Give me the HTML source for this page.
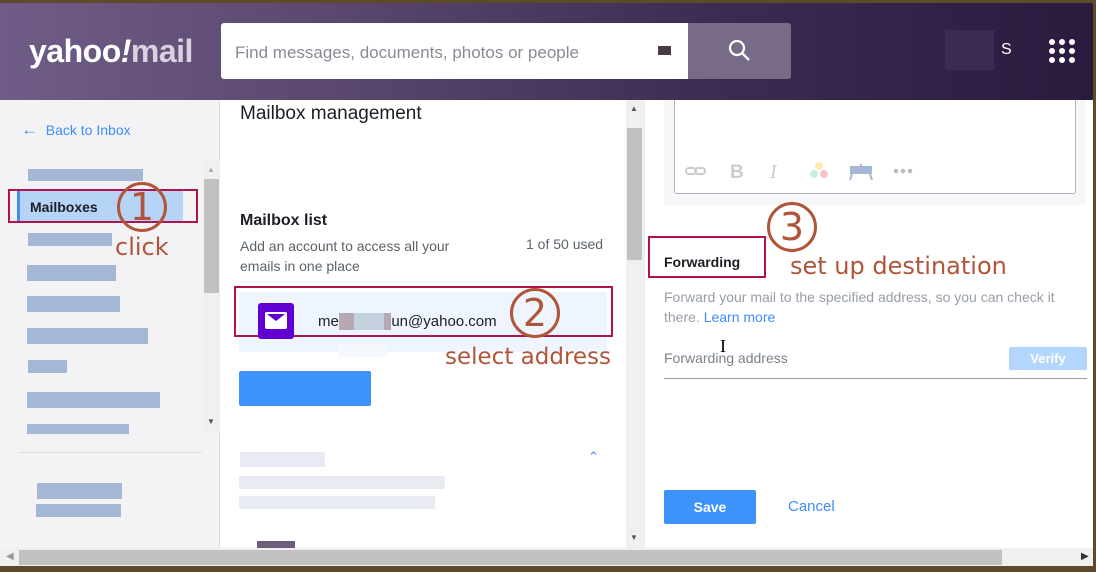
<!DOCTYPE html>
<html><head><meta charset="utf-8"><style>
*{margin:0;padding:0;box-sizing:border-box}
body{width:1096px;height:572px;overflow:hidden;position:relative;background:#fff;font-family:"Liberation Sans","DejaVu Sans",sans-serif}
.a{position:absolute}
.bar{position:absolute;background:#a4b8d6}
.red{position:absolute;border:2px solid #b0144a}
.ann{position:absolute;color:#b0553a;font-family:"DejaVu Sans",sans-serif}
.circ{position:absolute;border:3px solid #b0553a;border-radius:50%;color:#b0553a;font-family:"DejaVu Sans",sans-serif;text-align:center}
</style></head><body>
<div class="a" style="left:0;top:0;width:1096px;height:3px;background:#5e4a2a"></div>
<div class="a" style="left:0;top:3px;width:1096px;height:97px;background:linear-gradient(90deg,#6f5d87 0%,#5a486f 30%,#3c2c52 65%,#2a1a3e 100%)"></div>
<div class="a" style="left:29px;top:33px;font-size:32px;font-weight:bold;color:#fff;letter-spacing:-0.5px">yahoo<span style="font-style:italic">!</span><span style="color:#d8d2e0">mail</span></div>
<div class="a" style="left:221px;top:23px;width:467px;height:56px;background:#fff;border-radius:3px 0 0 3px"></div>
<div class="a" style="left:235px;top:43px;font-size:17px;color:#8a8a96">Find messages, documents, photos or people</div>
<div class="a" style="left:658px;top:46px;width:13px;height:9px;background:#4a3a44"></div>
<div class="a" style="left:688px;top:23px;width:103px;height:56px;background:#776b87;border-radius:0 3px 3px 0"></div>
<svg class="a" style="left:727px;top:38px" width="26" height="26" viewBox="0 0 26 26"><circle cx="10" cy="10" r="7" fill="none" stroke="#fff" stroke-width="2.2"/><path d="M15 15l7 7" stroke="#fff" stroke-width="2.4"/></svg>
<div class="a" style="left:945px;top:30px;width:49px;height:40px;background:#3c2b51"></div>
<div class="a" style="left:1001px;top:41px;font-size:16px;color:#fff">S</div>
<svg class="a" style="left:1048px;top:38px" width="28" height="26"><g fill="#fff"><circle cx="4" cy="4" r="3"/><circle cx="14" cy="4" r="3"/><circle cx="24" cy="4" r="3"/><circle cx="4" cy="13" r="3"/><circle cx="14" cy="13" r="3"/><circle cx="24" cy="13" r="3"/><circle cx="4" cy="22" r="3"/><circle cx="14" cy="22" r="3"/><circle cx="24" cy="22" r="3"/></g></svg>

<div class="a" style="left:0;top:100px;width:220px;height:448px;background:#f3f3f6;border-right:1px solid #ddd"></div>
<div class="a" style="left:21px;top:120px;font-size:14px;color:#3d8ef6"><span style="font-size:17px">&#8592;</span>&nbsp; Back to Inbox</div>
<div class="bar" style="left:28px;top:169px;width:115px;height:12px"></div>
<div class="a" style="left:17px;top:191px;width:166px;height:31px;background:#b6d4f6;border-left:3px solid #3d8ef6"></div>
<div class="a" style="left:30px;top:199px;font-size:14px;font-weight:bold;color:#1d1d26">Mailboxes</div>
<div class="red" style="left:8px;top:189px;width:190px;height:34px"></div>
<div class="bar" style="left:28px;top:233px;width:84px;height:13px"></div>
<div class="bar" style="left:27px;top:265px;width:89px;height:16px"></div>
<div class="bar" style="left:27px;top:296px;width:93px;height:16px"></div>
<div class="bar" style="left:27px;top:328px;width:121px;height:16px"></div>
<div class="bar" style="left:28px;top:360px;width:39px;height:13px"></div>
<div class="bar" style="left:27px;top:392px;width:133px;height:16px"></div>
<div class="bar" style="left:27px;top:424px;width:102px;height:10px"></div>
<div class="a" style="left:18px;top:452px;width:184px;height:1px;background:#ddd"></div>
<div class="bar" style="left:37px;top:483px;width:85px;height:16px"></div>
<div class="bar" style="left:36px;top:504px;width:85px;height:13px"></div>
<div class="a" style="left:203px;top:160px;width:17px;height:273px;background:#f0f0f0"></div>
<div class="a" style="left:204px;top:179px;width:15px;height:114px;background:#c1c1c1"></div>
<div class="a" style="left:207px;top:165px;font-size:8px;color:#aaa">&#9650;</div>
<div class="a" style="left:207px;top:417px;font-size:8px;color:#555">&#9660;</div>
<div class="circ" style="left:117px;top:182px;width:50px;height:50px;font-size:38px;line-height:44px">1</div>
<div class="ann" style="left:115px;top:233px;font-size:24px">click</div>

<div class="a" style="left:240px;top:103px;font-size:19px;color:#1d1d26">Mailbox management</div>
<div class="a" style="left:240px;top:212px;font-size:16px;font-weight:bold;color:#1d1d26">Mailbox list</div>
<div class="a" style="left:240px;top:236px;font-size:14px;color:#5b636a;line-height:20px">Add an account to access all your<br>emails in one place</div>
<div class="a" style="left:526px;top:236px;font-size:14px;color:#5b636a">1 of 50 used</div>
<div class="a" style="left:239px;top:292px;width:368px;height:60px;background:#eef5fe"></div>
<div class="a" style="left:338px;top:345px;width:50px;height:12px;background:#f5f8fd"></div>
<div class="red" style="left:234px;top:286px;width:379px;height:51px"></div>
<div class="a" style="left:258px;top:303px;width:36px;height:36px;background:#6001d2;border-radius:3px"></div>
<svg class="a" style="left:264px;top:311px" width="24" height="20"><rect x="1" y="1" width="22" height="17" rx="2" fill="#fff"/><path d="M3 3h18l-9 7z" fill="#6001d2"/></svg>
<div class="a" style="left:318px;top:313px;font-size:15px;color:#1d1d26">me<span style="background:#b7a9b4;color:transparent">xx</span><span style="background:#c4d2e0;color:transparent">xxxx</span><span style="background:#b7a9b4;color:transparent">x</span>un@yahoo.com</div>
<div class="circ" style="left:510px;top:288px;width:50px;height:50px;font-size:38px;line-height:44px">2</div>
<div class="ann" style="left:445px;top:344px;font-size:23px">select address</div>
<div class="a" style="left:239px;top:371px;width:132px;height:35px;background:#3d92fb;border-radius:2px"></div>
<div class="a" style="left:240px;top:452px;width:85px;height:15px;background:#e8ebf1"></div>
<div class="a" style="left:588px;top:449px;font-size:13px;color:#3d8ef6">&#8963;</div>
<div class="a" style="left:239px;top:476px;width:206px;height:13px;background:#e8ebf1"></div>
<div class="a" style="left:239px;top:496px;width:196px;height:13px;background:#e8ebf1"></div>
<div class="a" style="left:257px;top:541px;width:38px;height:7px;background:#6e5d7a"></div>
<div class="a" style="left:626px;top:100px;width:19px;height:448px;background:#f0f0f0"></div>
<div class="a" style="left:627px;top:128px;width:15px;height:132px;background:#c1c1c1"></div>
<div class="a" style="left:630px;top:104px;font-size:8px;color:#555">&#9650;</div>
<div class="a" style="left:630px;top:533px;font-size:8px;color:#555">&#9660;</div>

<div class="a" style="left:664px;top:100px;width:422px;height:105px;background:#f7f7f9"></div>
<div class="a" style="left:674px;top:100px;width:402px;height:94px;background:#fff;border:1px solid #b4b4bc;border-top:none;border-radius:0 0 3px 3px"></div>
<svg class="a" style="left:684px;top:160px" width="240" height="22">
<rect x="2" y="8" width="10" height="6" rx="3" fill="none" stroke="#ccc" stroke-width="2"/><rect x="11" y="8" width="10" height="6" rx="3" fill="none" stroke="#ccc" stroke-width="2"/>
<text x="46" y="18" font-family="Liberation Sans" font-weight="bold" font-size="19" fill="#ccc">B</text>
<text x="86" y="18" font-family="Liberation Serif" font-style="italic" font-size="20" fill="#ccc">I</text>
<circle cx="135" cy="6" r="4" fill="#fdecb4"/><circle cx="130" cy="14" r="4" fill="#c8ece0"/><circle cx="140" cy="14" r="4" fill="#f8c4c8"/>
<rect x="166" y="6" width="22" height="8" fill="#a4b8d6"/><path d="M168 14l-2 6M186 14l2 6M177 4v2" stroke="#a4b8d6" stroke-width="2"/>
<circle cx="212" cy="11" r="2.3" fill="#bbb"/><circle cx="219" cy="11" r="2.3" fill="#bbb"/><circle cx="226" cy="11" r="2.3" fill="#bbb"/>
</svg>
<div class="red" style="left:648px;top:236px;width:118px;height:42px"></div>
<div class="a" style="left:664px;top:254px;font-size:14px;font-weight:bold;color:#1d1d26">Forwarding</div>
<div class="circ" style="left:767px;top:202px;width:50px;height:50px;font-size:38px;line-height:44px">3</div>
<div class="ann" style="left:790px;top:252px;font-size:24px">set up destination</div>
<div class="a" style="left:664px;top:287px;font-size:14px;color:#979ea8;line-height:20px;width:430px">Forward your mail to the specified address, so you can check it there. <span style="color:#3d8ef6">Learn more</span></div>
<div class="a" style="left:664px;top:350px;font-size:14px;color:#7a828c">Forwarding address</div>
<div class="a" style="left:720px;top:336px;font-size:18px;color:#000;font-family:'Liberation Serif'">I</div>
<div class="a" style="left:1009px;top:347px;width:78px;height:23px;background:#b3d6fc;border-radius:2px;color:#fff;font-size:13px;font-weight:bold;text-align:center;line-height:23px">Verify</div>
<div class="a" style="left:664px;top:378px;width:423px;height:1px;background:#999"></div>
<div class="a" style="left:664px;top:490px;width:92px;height:34px;background:#3d92fb;border-radius:2px;color:#fff;font-size:14px;font-weight:bold;text-align:center;line-height:34px">Save</div>
<div class="a" style="left:788px;top:498px;font-size:15px;color:#3d8ef6">Cancel</div>

<div class="a" style="left:1093px;top:0;width:3px;height:572px;background:#5e4a2a"></div>
<div class="a" style="left:0;top:548px;width:1093px;height:18px;background:#f0f0f0"></div>
<div class="a" style="left:19px;top:550px;width:983px;height:15px;background:#c1c1c1"></div>
<div class="a" style="left:6px;top:551px;font-size:10px;color:#999">&#9664;</div>
<div class="a" style="left:1081px;top:551px;font-size:10px;color:#333">&#9654;</div>
<div class="a" style="left:0;top:566px;width:1096px;height:6px;background:#5e4a2a"></div>
</body></html>
